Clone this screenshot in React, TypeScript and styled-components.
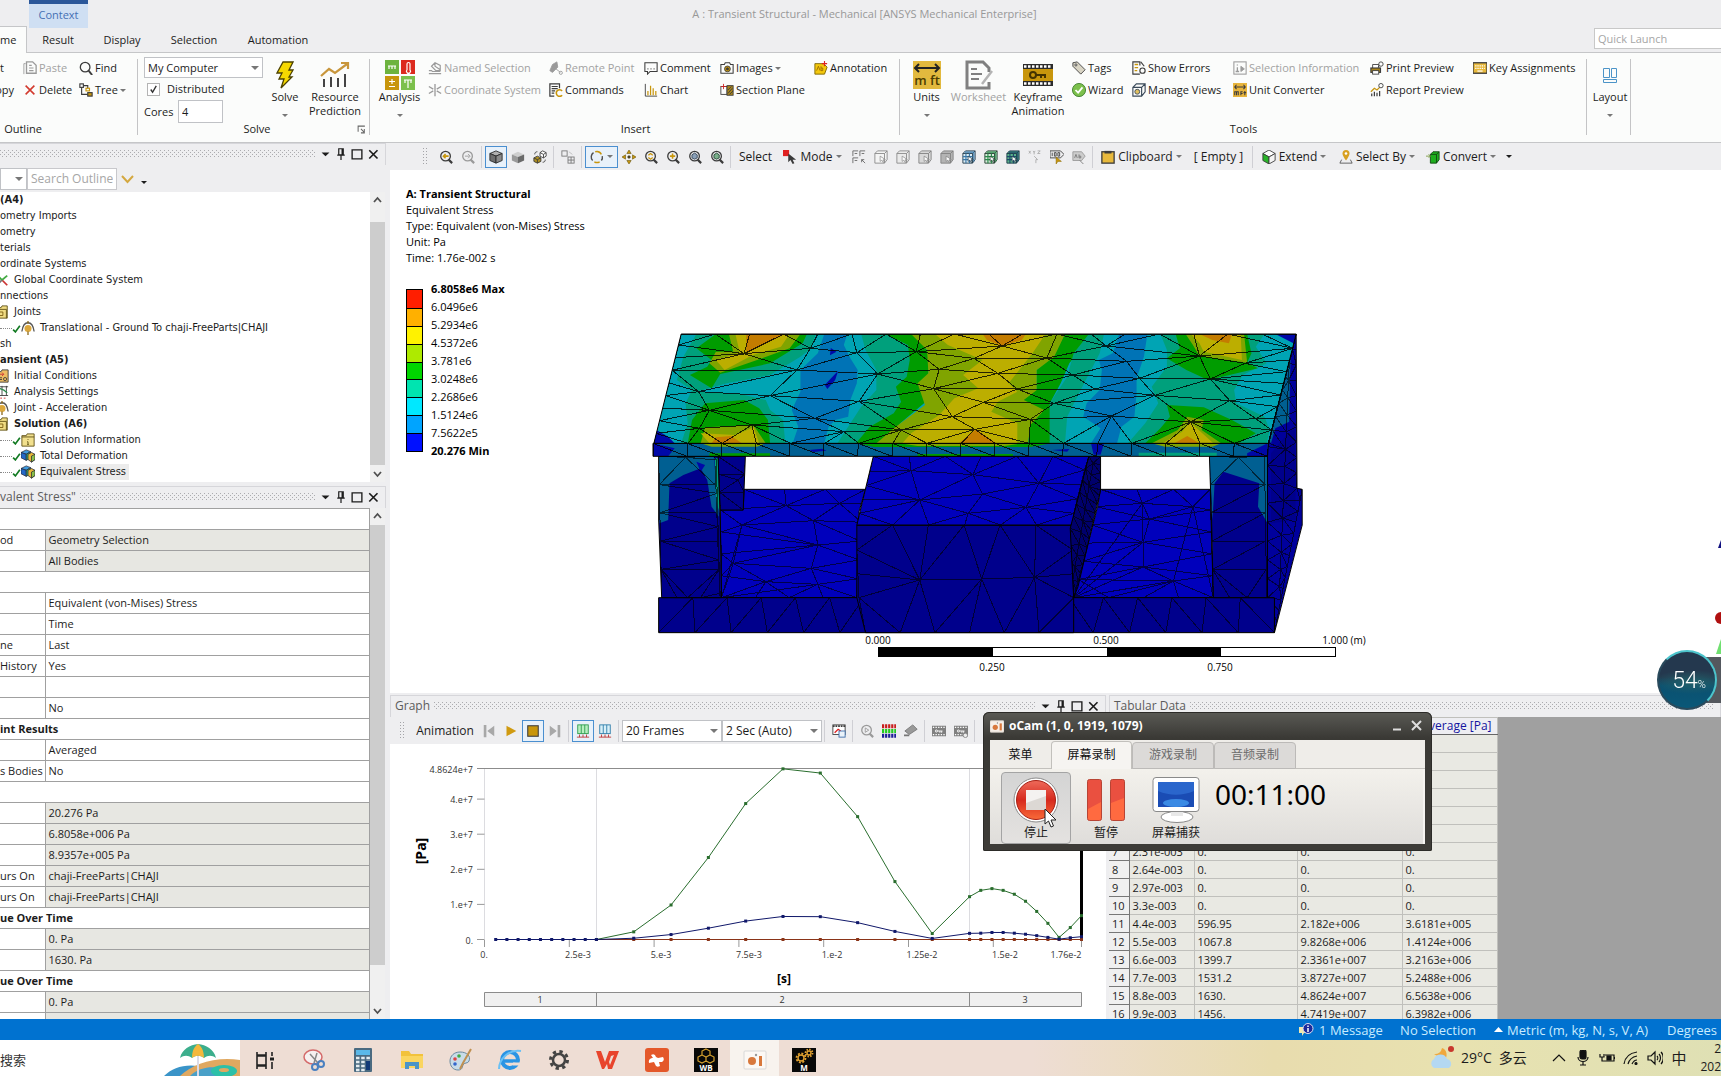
import React from 'react';
import styled, { createGlobalStyle, css } from 'styled-components';

/* ---------- base ---------- */

const ui = `"Open Sans", "Noto Sans", "Noto Sans CJK SC", sans-serif`;

const Global = createGlobalStyle`
  * { box-sizing: border-box; }
  body { margin: 0; overflow: hidden; background: #eeeef0; font: 11px/16px ${ui}; color: #1c1c1c; }
  button, input, select { font: inherit; color: inherit; margin: 0; }
  button { border: 0; background: none; padding: 0; cursor: default; }
  svg { display: block; flex: none; }
`;

const Shell = styled.div`
  height: 100vh;
  display: flex;
  flex-direction: column;
  overflow: hidden;
`;

/* ---------- icons ---------- */

const K = '#3c3c3c';
const GOLD = '#c8960c';
const GREY = '#9a9a9a';

const zoomGlass = (inner: React.ReactNode, c = K) => (
  <g fill="none" stroke={c}>
    <circle cx="7.5" cy="7" r="5.5" strokeWidth="1.5" />
    <path d="M11 11l4 4" strokeWidth="2.500" />
    {inner}
  </g>
);
const selCube = (stroke: string, fill: string, grid?: string) => (
  <g>
    <path d="M1 4l3-3h11v10l-3 4H1z" fill={fill} stroke={stroke} />
    <path d="M1 4h11v11M12 4l3-3" fill="none" stroke={stroke} />
    {grid && <path d="M4.500 4v11M8.500 4v11M1 7.500h11M1 11h11M3 2.500h11M13.500 3v10" stroke={grid} strokeWidth="1.300" fill="none" />}
    <path d="M7 7v6l2-1.500 1.500 3 1-.5-1-3H13z" fill="#fff" stroke={stroke} strokeWidth=".8" />
  </g>
);
const film = (
  <g>
    <rect x="0" y="2" width="16" height="12" fill="#808080" />
    <path d="M1 3.800h14M1 12.200h14" stroke="#fff" strokeWidth="1.500" strokeDasharray="1.500 1.500" />
    <circle cx="5" cy="8" r="1.200" fill="none" stroke="#fff" />
    <path d="M6 8h6M9 8v2M11 8v2" stroke="#fff" />
  </g>
);

const art: Record<string, React.ReactNode> = {
  paste: <g fill="none" stroke={GREY}><path d="M1 15V3h2" /><path d="M4 1h7l4 4v9H4z" strokeWidth="1.500" /><path d="M7 5h3M7 8h5M7 11h5" strokeWidth="1.300" /></g>,
  find: <g fill="none" stroke={K} strokeWidth="1.500"><circle cx="7" cy="7" r="5.500" /><path d="M11 11L15 16" strokeWidth="2.200" /></g>,
  del: <path d="M3 3l10 10M13 3L3 13" stroke="#d23a2e" strokeWidth="1.800" />,
  tree: <g fill="none" stroke={K} strokeWidth="1.300"><rect x="1" y="1" width="4" height="4" /><path d="M3 5v8h7M5 3h5v3" /><rect x="8" y="6" width="4" height="3" stroke={GOLD} /><rect x="10" y="11" width="5" height="4" fill={GOLD} /></g>,
  named: <g fill="none" stroke={GREY} strokeWidth="1.300"><path d="M4 6l4-4 6 3v6H9zM8 2v4l6 4M1 11h3l1 1h9M1 14.500h14" /></g>,
  coord: <g fill="none" stroke={GREY} strokeWidth="1.500"><path d="M8 1v14M1 4l5 3M10 9l5 3M1 12l5-3M10 7l5-3" /></g>,
  remote: <g stroke={GREY} fill={GREY}><path d="M1 11L4 4l5-3 1 6-6 6z" /><path d="M8 9l5 4" /><circle cx="13.500" cy="13.500" r="1.800" fill="none" /></g>,
  commands: <g fill="none" stroke={K}><path d="M6 15H1V1h11v5M3 4h7M3 6.500h7M3 9h4M3 11.500h3" strokeWidth="1.400" /><path d="M15 9a3.800 3.800 0 1 0 0 5" stroke={GOLD} strokeWidth="1.800" /></g>,
  comment: <g fill="none" stroke={K}><path d="M1 2h14v10H7l-3 3v-3H1z" strokeWidth="1.200" /><path d="M4 9h1M7.500 9h1M11 9h1" strokeWidth="1.300" /></g>,
  chart: <g fill="none"><path d="M1.500 1v14H15" stroke={K} /><path d="M4.500 14V9M7.500 14V3M10.500 14V6M13.500 14V9" stroke={GOLD} strokeWidth="1.400" /></g>,
  images: <g fill="none" stroke={K}><path d="M1 4h4l1-2h5l1 2h3v10H1z" strokeWidth="1.200" /><circle cx="8.500" cy="9" r="3.300" fill={GOLD} /><circle cx="8.500" cy="9" r="1.200" fill={K} /></g>,
  section: <g fill="none" stroke={K}><rect x="1" y="4" width="7" height="9" /><rect x="8" y="3" width="7" height="11" fill="#a8841a" /><path d="M9 12l5-6M9 8l4-4M11 13l4-4" /><path d="M4 1v6M1 4h6" stroke="#c22" /></g>,
  annotation: <g><path d="M1 3h10l4 4-3 8H1z" fill="#f4c80c" stroke="#7a6200" /><path d="M3 11l2-5 2 5M8 6v5h2V8H8" fill="none" stroke="#9a6c00" /><path d="M12 0v6M9 3h6" stroke="#d22" strokeWidth="1.300" /></g>,
  tags: <g fill="#d9d5c5" stroke={K}><path d="M1 2l5-1 9 9-5 5-9-9z" /><circle cx="4.500" cy="4.500" r="1.200" fill="#fff" /></g>,
  wizard: <g><circle cx="8" cy="8" r="7.500" fill="#7cc04c" stroke="#3c7a2c" /><path d="M4 8l3 3 5-6" fill="none" stroke="#fff" strokeWidth="2" /></g>,
  errors: <g fill="none" stroke={K}><path d="M9 15H1V1h8v4" strokeWidth="1.300" /><path d="M3 4h4M3 7.500h4M3 11h3" stroke={GOLD} strokeWidth="1.500" /><path d="M10 1l4 5" strokeWidth="1.300" /><circle cx="12" cy="11" r="3" strokeWidth="1.300" /></g>,
  views: <g fill="none" stroke="#3a4a5a"><path d="M1 5l4-4h10v9l-4 5H1zM1 5h10v10M11 5l4-4" strokeWidth="1.300" /><circle cx="6" cy="10" r="2.800" fill="#e0c060" /></g>,
  selinfo: <g fill="none" stroke={GREY}><rect x="1" y="1" width="14" height="14" strokeWidth="1.200" /><path d="M5 4v1M5 7v5M3 12h4" strokeWidth="1.500" /><path d="M9 6v6l4-3z" fill={GREY} /></g>,
  unitconv: <g><rect x="0" y="0" width="16" height="16" fill="#e8b53c" /><path d="M2 4.500h12M4 2l-2 2.500L4 7M12 2l2 2.500L12 7M2 14V10h4v4M4 10v4M9 14v-4h2M9 12h2M13.500 9v5M12 11h3" stroke={K} fill="none" strokeWidth="1.200" /></g>,
  print: <g><path d="M3 8V4h7v4" fill="#fff" stroke={K} /><rect x="1" y="8" width="11" height="5" fill="#a8841a" stroke={K} strokeWidth="1.300" /><rect x="3" y="11" width="7" height="4" fill="#fff" stroke={K} /><circle cx="12.500" cy="3.500" r="2.500" fill="#fff" stroke={K} /><path d="M10.500 5.500L9 7" stroke={K} /></g>,
  report: <g fill="none"><path d="M2 15v-3M5 15v-5M8 15v-4M11 15V9" stroke={K} strokeWidth="1.400" /><path d="M1 10l4-4 3 2 3-3" stroke={GOLD} strokeWidth="1.500" /><circle cx="12.500" cy="3" r="2.500" stroke={K} /></g>,
  keys: <g><rect x="0" y="2" width="16" height="12" fill="#e8b93c" stroke={K} strokeWidth="1.500" /><path d="M2.500 5.500h11M2.500 8.500h11" stroke="#fff" strokeWidth="1.400" strokeDasharray="1.500 1" /><path d="M5 11.500h6" stroke="#fff" strokeWidth="1.400" /></g>,
  zprev: zoomGlass(<path d="M11 7H5M7.500 4.500L5 7l2.500 2.500" stroke={GOLD} strokeWidth="1.800" />),
  znext: zoomGlass(<path d="M4.500 7h5M8 4.500L10.500 7 8 9.500" />, GREY),
  cubeBox: <g stroke="#2a2a2a"><path d="M8 1l7 3-7 3-7-3z" fill="#b0b0b0" /><path d="M1 4l7 3v8l-7-3z" fill="#6e6e6e" /><path d="M15 4L8 7v8l7-3z" fill="#8a8a8a" /></g>,
  cubeSolid: <g><path d="M8 2l7 3-7 3-7-3z" fill="#cfcfcf" /><path d="M1 5l7 3v7l-7-3z" fill="#9a9a9a" /><path d="M15 5L8 8v7l7-3z" fill="#6a6a6a" /></g>,
  cubes: <g stroke={K}><path d="M1 9l4-2 4 2v4l-4 2-4-2z" fill="#b09020" /><path d="M8 3l3-2 4 2v4l-3 2-4-2z" fill="#fff" /><path d="M8 3l4 2 3-2M12 5v4M1 9l4 2 4-2M5 11v4M2 5c0-2 1-3 3-3M14 11c0 2-1 3-3 3" fill="none" /></g>,
  layers: <g fill="none" stroke="#777"><rect x="1" y="1" width="6" height="6" /><rect x="8" y="8" width="7" height="7" /><path d="M11.500 8v7M8 11.500h7" /><path d="M9 2l4 3" stroke="#bbb" /></g>,
  rotate: <g fill="none" stroke="#505050" strokeWidth="1.600"><path d="M3 12a6 6 0 0 1 1-9" /><path d="M6 2a6 6 0 0 1 7 3" stroke={GOLD} /><path d="M14 7a6 6 0 0 1-1 5" /><path d="M11 13.500a6 6 0 0 1-6 0" stroke={GOLD} /></g>,
  pan: <g fill={GOLD} stroke="#5a4800" strokeWidth=".6"><path d="M8 0l2.500 4h-5zM8 16l2.500-4h-5zM0 8l4-2.500v5zM16 8l-4-2.500v5z" /><circle cx="8" cy="8" r="1.500" fill={K} /></g>,
  zvert: zoomGlass(<path d="M5 6l2.500-2L10 6M5 8.500l2.500 2 2.500-2" stroke={GOLD} strokeWidth="1.500" />),
  zplus: zoomGlass(<path d="M7.500 4v6M4.500 7h6" stroke={GOLD} strokeWidth="1.800" />),
  zcube: zoomGlass(<path d="M4.500 5.500l3-2 3 2v3.500l-3 1.500-3-1.500z" fill="#8aa0b8" stroke="#345" />),
  zcube2: zoomGlass(<path d="M4.500 5.500l3-2 3 2v3.500l-3 1.500-3-1.500z" fill="#7ab08a" stroke="#243" />),
  mode: <g><rect x="0" y="0" width="7" height="7" fill="#e02020" /><path d="M6 4v10l2.500-2.500L11 16l2-1-2-4h4z" fill="#3a3a3a" /></g>,
  sgrid: <g fill="none" stroke="#666"><path d="M1 7V1h6M9 7V1h6M1 15V9h6M3 4h3M11 4h3M3 12h3M11 11l4 4M11 14v-3h3" /></g>,
  sc1: selCube('#888', '#f4f4f4'),
  sc2: selCube('#888', '#eaeaea'),
  sc3: selCube('#808080', '#d8d8d8'),
  sc4: selCube('#808080', '#b4b4b4'),
  sc5: selCube('#203848', '#dcecf4', '#3a78a8'),
  sc6: selCube('#1e3a2c', '#d8ecdc', '#2a8a4a'),
  sc7: selCube('#1c3848', '#5ab08a', '#1c4a6a'),
  xyz: <g fill="none" stroke="#aaa"><path d="M1 1l2 3M3 1L1 4M6 1l1 2 1-2M7 3v2M11 1h3l-3 3h3M7 7l4 4h-2v4" /></g>,
  tag100: <g fill="none" stroke={K}><path d="M0 1h12l4 4-4 4H0z" /><path d="M2.500 3v4M5 3h2v4H5zM9 3h2v4H9z" /><path d="M7 8v8l2-3h4z" fill={GOLD} stroke="#8a6a00" strokeWidth=".6" /></g>,
  abc: <g><path d="M1 2h10l4 5-4 5H1z" fill="#ccc" stroke="#999" /><path d="M3 9l1.500-4L6 9M8 5v4h2V7H8M9 12l4 4" fill="none" stroke="#777" /></g>,
  clipboard: <g><rect x="1" y="2" width="14" height="13" fill="#e8b93c" stroke={K} strokeWidth="1.500" /><path d="M4 1h8v3H4z" fill={K} /></g>,
  extend: <g stroke={K}><path d="M8 0l7 4-7 4-7-4z" fill="#fff" /><path d="M1 4l7 4v8l-7-4z" fill="#28b428" /><path d="M15 4L8 8v8l7-4z" fill="#f4f4f4" /></g>,
  selectby: <g><path d="M8 0a4 4 0 0 1 4 4c0 3-4 8-4 8S4 7 4 4a4 4 0 0 1 4-4z" fill="#d8a020" /><circle cx="8" cy="4" r="1.500" fill="#fff" /><path d="M3 11l-2 4M13 11l2 4M1 15h14" fill="none" stroke="#555" /></g>,
  convert: <g><path d="M5 5l3-3h7v9l-3 4H5z" fill="#1eae1e" stroke="#114411" /><path d="M5 5h7v10M12 5l3-3" fill="none" stroke="#114411" /><path d="M0 7h5M3 5l2 2-2 2" fill="none" stroke="#7a9a40" /></g>,
  csys: <g strokeWidth="2" fill="none"><path d="M8 8L3 3" stroke="#3a3" /><path d="M8 8l6 6" stroke="#c33" /><path d="M8 8l6-5" stroke="#4a4" /><path d="M8 8l-5 5" stroke="#777" /></g>,
  folder: <g stroke="#5c4e12"><path d="M1 3h6l1-2h6v14H1z" fill="#f0dc82" /><path d="M1 5h12v10" fill="none" /><path d="M4 12V8h5v4z" fill="none" stroke="#7a5c10" /></g>,
  info: <g stroke="#5c4e12"><path d="M1 3h5l1-2h8v14H1z" fill="#f2e08e" /><path d="M1 4.500h14" /><path d="M8 7v1M7 10h1v3M7 13h2" fill="none" /></g>,
  joint: <g><path d="M1 12C2 5 5 2 8 2s6 3 7 10" fill="none" stroke="#555" strokeWidth="1.500" /><circle cx="8" cy="8.500" r="4" fill="#dca83c" /><path d="M8 12v4M8 0v3" stroke="#8a6a20" strokeWidth="1.500" /></g>,
  init: <g stroke={K}><path d="M1 3h6l1-2h7v14H1z" fill="#eebc62" /><path d="M3 6h7M8 4l2 2-2 2" fill="none" stroke="#c33" /><path d="M4 10h4M4 12h4" /><circle cx="11.500" cy="11.500" r="1.800" fill="none" /></g>,
  settings: <g fill="none" stroke={K}><path d="M3 1v11M8 1v11M13 1v11M1 2h14M1 12h14" /><path d="M1 8c3-6 8-4 13 1" stroke="#2a8a4a" strokeWidth="1.500" /><path d="M2 15h12" stroke="#c22" strokeDasharray="2 2" /></g>,
  result: <g strokeWidth=".8" stroke="#223"><path d="M0 4l6-3 5 2-5 3z" fill="#3f9be0" /><path d="M0 4l6 2v7l-6-3z" fill="#2468c8" /><path d="M6 6l5-3v7l-5 3z" fill="#38b070" /><path d="M8 6l4-2 4 2v6l-4 3-4-3z" fill="#e8b838" /><path d="M12 8l4-2v6l-4 3z" fill="#8ac04a" /></g>,
  check: <path d="M2 10l4 4 8-11" fill="none" stroke="#127a22" strokeWidth="3" />,
  pin: <path d="M5 1h6v8H5zM9.500 1v8M3 9.500h10M8 10v6" fill="none" stroke="#1c1c1c" strokeWidth="1.600" />,
  max: <path d="M1.500 2.500h13v12h-13z" fill="none" stroke="#1c1c1c" strokeWidth="1.800" />,
  close: <path d="M3 3l11 11M14 3L3 14" stroke="#1c1c1c" strokeWidth="2.200" />,
  drop: <path d="M1 6h14l-7 7z" fill="#1c1c1c" />,
  first: <path d="M2 1h3v14H2zM14 2v12L6 8z" fill="#a8a8a8" />,
  last: <path d="M11 1h3v14h-3zM2 2v12l8-6z" fill="#a8a8a8" />,
  play: <path d="M2 1v14l13-7z" fill="#d09a10" />,
  stopsq: <rect x="1" y="1" width="14" height="14" fill="#c8960c" stroke="#444" strokeWidth="1.500" />,
  bars1: <g fill="none" stroke="#2a9a4a"><rect x="2" y="1" width="12" height="10" fill="#b8f0c0" /><path d="M6 1v10M10 1v10" /><path d="M1 15h14M4 12v3M8 12v3M12 12v3" stroke="#b33" /></g>,
  bars2: <g fill="none" stroke="#2a7aa8"><rect x="2" y="1" width="12" height="10" fill="#d8f0f8" /><path d="M6 1v10M10 1v10" /><path d="M1 15h14M4 12v3M8 12v3M12 12v3" stroke="#b33" /></g>,
  expo: <g><rect x="1" y="1" width="14" height="11" fill="#fff" stroke={K} /><path d="M1 2.500h14" stroke={K} strokeWidth="2" strokeDasharray="2 1" /><path d="M3 10l4-4 3 2" fill="none" stroke="#d22" strokeWidth="1.500" /><rect x="8" y="8" width="7" height="7" fill="#eaf2fa" stroke="#3a6aa8" /></g>,
  zplay: zoomGlass(<path d="M6 4.500v5l4-2.500z" />, GREY),
  rgb: <g fill="none" strokeWidth="4.500" strokeDasharray="2.500 1"><path d="M0 2.500h16" stroke="#c81e1e" /><path d="M0 8h16" stroke="#22cc22" /><path d="M0 13.500h16" stroke="#1e1e9a" /></g>,
  cam: <g fill="#999" stroke="#777"><path d="M1 8l9-7 5 5-9 6z" /><path d="M0 13h6" strokeWidth="2" /></g>,
  film1: film,
  film2: <g>{film}<circle cx="13" cy="13" r="2.500" fill="#eee" stroke="#888" /></g>,
  corner: <g fill="none" stroke="#666" strokeWidth="1.800"><path d="M2 12V2h12M7 7l6 6M13 7v7H7" /></g>,
};

const Icon = ({ n, s = 14 }: { n: string; s?: number }) => (
  <svg width={s} height={s} viewBox="0 0 16 16" aria-hidden="true">{art[n]}</svg>
);

const Caret = styled.i<{ $dark?: boolean; $big?: boolean }>`
  width: 0;
  height: 0;
  border: ${p => (p.$big ? 4 : 3)}px solid transparent;
  border-bottom: 0;
  border-top-color: ${p => (p.$dark ? '#1c1c1c' : '#777')};
`;

/* ---------- title and tabs ---------- */

const TitleBar = styled.header`
  display: grid;
  grid-template-columns: 29px 59px 1fr 80px;
  height: 26px;
`;
const ContextTab = styled.div`
  grid-column: 2;
  border-top: 4px solid #2b579a;
  background: #cfdff3;
  color: #4670b4;
  text-align: center;
  line-height: 22px;
`;
const Title = styled.h1`
  margin: 0;
  font-size: 11px;
  font-weight: 400;
  line-height: 28px;
  color: #989898;
  text-align: center;
`;
const Tabs = styled.nav`
  display: flex;
  height: 27px;
  border-bottom: 1px solid #c5c6c8;
`;
const Tab = styled.button<{ $w: number; $on?: boolean }>`
  width: ${p => p.$w}px;
  height: 27px;
  ${p => p.$on && css`
    background: #fbfcfb;
    border: 1px solid #c5c6c8;
    border-width: 1px 1px 0 0;
    padding-right: 12px;
    text-align: right;
  `}
`;
const QuickLaunch = styled.input`
  margin: 2px 0 0 auto;
  width: 127px;
  height: 21px;
  border: 1px solid #c8c8c8;
  border-right: 0;
  background: #fff;
  padding: 0 3px;
  &::placeholder { color: #a6a6a6; opacity: 1; }
`;

/* ---------- ribbon ---------- */

const Ribbon = styled.div`
  display: flex;
  height: 90px;
  background: #fbfcfb;
  border-bottom: 1px solid #c5c6c8;
`;
const Group = styled.section<{ $w: number; $pad?: number }>`
  position: relative;
  width: ${p => p.$w}px;
  padding: 4px 0 0 ${p => p.$pad ?? 0}px;
  display: flex;
  flex-direction: column;
  &::after {
    content: '';
    position: absolute;
    right: 0;
    top: 6px;
    bottom: 7px;
    width: 1px;
    background: #c4c4c6;
  }
`;
const GroupBody = styled.div`
  display: flex;
  height: 64px;
`;
const GroupLabel = styled.div<{ $w?: number }>`
  width: ${p => (p.$w ? p.$w + 'px' : '100%')};
  display: flex;
  justify-content: center;
  align-items: center;
  position: relative;
  & > button { position: absolute; right: 4px; }
`;
const Col = styled.div<{ $w: number }>`
  width: ${p => p.$w}px;
  flex: none;
`;
const Cmd = styled.button<{ $off?: boolean; $cut?: boolean }>`
  display: flex;
  align-items: center;
  gap: 2px;
  height: 22px;
  white-space: nowrap;
  color: ${p => (p.$off ? '#a2a2a2' : '#1c1c1c')};
  ${p => p.$cut && 'width: 14px; justify-content: flex-end;'}
`;
const Big = styled.button<{ $w: number; $off?: boolean }>`
  width: ${p => p.$w}px;
  flex: none;
  display: flex;
  flex-direction: column;
  align-items: center;
  padding-top: 3px;
  line-height: 14px;
  color: ${p => (p.$off ? '#a2a2a2' : '#1c1c1c')};
  & > span:first-child { height: 30px; display: grid; place-items: center; }
  & > i { margin-top: 10px; }
`;
const Combo = styled.label<{ $w: number; $h?: number }>`
  position: relative;
  display: flex;
  align-items: center;
  width: ${p => p.$w}px;
  height: ${p => p.$h ?? 21}px;
  flex: none;
  select {
    appearance: none;
    width: 100%;
    height: 100%;
    border: 1px solid #c0c2c6;
    background: #fff;
    padding: 0 3px;
    border-radius: 0;
  }
  i { position: absolute; right: 4px; pointer-events: none; }
`;
const CheckRow = styled.label`
  display: flex;
  align-items: center;
  gap: 7px;
  height: 22px;
  padding-left: 3px;
  input {
    appearance: none;
    width: 13px;
    height: 13px;
    border: 1px solid #b4b4b4;
    background: #fff url("data:image/svg+xml,%3Csvg xmlns='http://www.w3.org/2000/svg' viewBox='0 0 12 12'%3E%3Cpath d='M3 6l2 3 4-7' fill='none' stroke='%23333' stroke-width='1.500'/%3E%3C/svg%3E");
  }
`;
const CoresRow = styled.label`
  display: flex;
  align-items: center;
  justify-content: space-between;
  width: 79px;
  input { width: 45px; height: 23px; border: 1px solid #c0c2c6; background: #fff; padding: 0 3px; }
`;

const Item = ({ i, children, off, drop }: { i: string; children: React.ReactNode; off?: boolean; drop?: boolean }) => (
  <Cmd $off={off}><Icon n={i} />{children}{drop && <Caret />}</Cmd>
);

const RibbonBar = () => (
  <Ribbon>
    <Group $w={138}>
      <GroupBody>
        <Col $w={23}><Cmd>t</Cmd><Cmd $cut>opy</Cmd></Col>
        <Col $w={56}><Item i="paste" off>Paste</Item><Item i="del">Delete</Item></Col>
        <Col $w={58}><Item i="find">Find</Item><Item i="tree" drop>Tree</Item></Col>
      </GroupBody>
      <GroupLabel $w={46}>Outline</GroupLabel>
    </Group>
    <Group $w={232} $pad={6}>
      <GroupBody>
        <Col $w={118}>
          <Combo $w={119}><select aria-label="Solver"><option>My Computer</option></select><Caret $big /></Combo>
          <CheckRow><input type="checkbox" defaultChecked />Distributed</CheckRow>
          <CoresRow>Cores<input defaultValue="4" /></CoresRow>
        </Col>
        <Big $w={46}>
          <span><svg width="18" height="28" viewBox="0 0 18 28"><path d="M7 1h10l-4 8h4l-4 7h3L5 27l3-9H3l3-6H1z" fill="#f6d800" stroke="#4c4200" strokeWidth="1.300" /></svg></span>
          Solve<Caret />
        </Big>
        <Big $w={54}>
          <span><svg width="30" height="26" viewBox="0 0 30 26"><path d="M4 25v-8M11 25V15M18 25v-9M25 25V12" stroke="#444" strokeWidth="2" /><path d="M1 14l8-7 6 4L27 2M21 1h7v6" fill="none" stroke="#c8963c" strokeWidth="2.200" /></svg></span>
          Resource<br />Prediction
        </Big>
      </GroupBody>
      <GroupLabel>Solve<button aria-label="Solve options"><Icon n="corner" s={9} /></button></GroupLabel>
    </Group>
    <Group $w={530} $pad={1}>
      <GroupBody>
        <Big $w={57}>
          <span><svg width="30" height="30" viewBox="0 0 30 30"><path d="M0 0h14v14H0z" fill="#6db33f" /><path d="M16 0h14v14H16z" fill="#dc2a1e" /><path d="M0 16h14v14H0z" fill="#c8960c" /><path d="M16 16h14v14H16z" fill="#7cc04c" /><path d="M3 6h8M4 6v3M7 6v3M10 6v3M22 10V4a1.500 1.500 0 0 1 3 0v6a2 2 0 1 1-3 0M7 19v5M4 21.500h6M4 26.500h6M19 20h8M23 20v8M20 20v3M26 20v3" fill="none" stroke="#fff" strokeWidth="1.200" /></svg></span>
          Analysis<Caret />
        </Big>
        <Col $w={121}><Item i="named" off>Named Selection</Item><Item i="coord" off>Coordinate System</Item></Col>
        <Col $w={95}><Item i="remote" off>Remote Point</Item><Item i="commands">Commands</Item></Col>
        <Col $w={76}><Item i="comment">Comment</Item><Item i="chart">Chart</Item></Col>
        <Col $w={94}><Item i="images" drop>Images</Item><Item i="section">Section Plane</Item></Col>
        <Col $w={80}><Item i="annotation">Annotation</Item></Col>
      </GroupBody>
      <GroupLabel>Insert</GroupLabel>
    </Group>
    <Group $w={687}>
      <GroupBody>
        <Big $w={53}>
          <span><svg width="28" height="28" viewBox="0 0 28 28"><rect width="28" height="28" fill="#e2b93e" /><path d="M2 7h24M6 3L2 7l4 4M22 3l4 4-4 4" fill="none" stroke="#222" strokeWidth="2" /><text x="14" y="24" textAnchor="middle" fontSize="13" fontWeight="600" fill="#4c3c00">m ft</text></svg></span>
          Units<Caret />
        </Big>
        <Big $w={51} $off>
          <span><svg width="28" height="30" viewBox="0 0 28 30"><path d="M24 12V8l-6-6H2v26h22v-6" fill="none" stroke="#808080" strokeWidth="3" /><path d="M6 9h6M6 14h11M6 19h8" stroke="#808080" strokeWidth="2" /><path d="M27 11L17 24" stroke="#b4b4b4" strokeWidth="2.500" /></svg></span>
          Worksheet
        </Big>
        <Big $w={68}>
          <span><svg width="30" height="22" viewBox="0 0 30 22"><rect width="30" height="22" fill="#2c2c2c" /><path d="M1 2.500h28M1 19.500h28" stroke="#fff" strokeWidth="2.500" strokeDasharray="2.500 1.500" /><rect y="5" width="30" height="12" fill="#c8960c" /><circle cx="10" cy="11" r="3" fill="none" stroke="#443300" strokeWidth="2" /><path d="M13 11h10M18 11v3M22 11v3" stroke="#443300" strokeWidth="2" /></svg></span>
          Keyframe<br />Animation
        </Big>
        <Col $w={60}><Item i="tags">Tags</Item><Item i="wizard">Wizard</Item></Col>
        <Col $w={101}><Item i="errors">Show Errors</Item><Item i="views">Manage Views</Item></Col>
        <Col $w={137}><Item i="selinfo" off>Selection Information</Item><Item i="unitconv">Unit Converter</Item></Col>
        <Col $w={103}><Item i="print">Print Preview</Item><Item i="report">Report Preview</Item></Col>
        <Col $w={110}><Item i="keys">Key Assignments</Item></Col>
      </GroupBody>
      <GroupLabel>Tools</GroupLabel>
    </Group>
    <Group $w={44} $pad={2}>
      <GroupBody>
        <Big $w={42}>
          <span><svg width="14" height="15" viewBox="0 0 14 15"><path d="M.5.500h6v9h-6zM8.500.500h5v9h-5zM.5 11.500h13v3H.5z" fill="none" stroke="#4c94c8" /></svg></span>
          Layout<Caret />
        </Big>
      </GroupBody>
    </Group>
  </Ribbon>
);

/* ---------- docked panels ---------- */

const Work = styled.main`
  flex: 1;
  min-height: 0;
  display: grid;
  grid-template-columns: 386px minmax(0, 1fr);
  column-gap: 4px;
`;
const Side = styled.aside`
  display: flex;
  flex-direction: column;
  min-height: 0;
`;
const PanelHead = styled.div<{ $gap?: boolean }>`
  display: flex;
  align-items: center;
  gap: 4px;
  height: 22px;
  flex: none;
  margin-top: ${p => (p.$gap ? 4 : 0)}px;
  padding: 0 6px 2px 0;
  border: 1px solid #d6d6da;
  border-width: 1px 1px 0 0;
  color: #5c5c5c;
  font-size: 12px;
  white-space: nowrap;
`;
const Dots = styled.span`
  flex: 1;
  height: 8px;
  background-image:
    conic-gradient(at 1px 1px, transparent 75%, #ababaf 0),
    conic-gradient(at 1px 1px, transparent 75%, #ababaf 0);
  background-size: 4px 4px;
  background-position: 0 0, 2px 2px;
`;
const Ctl = styled.button`
  width: 12px;
  display: grid;
  place-items: center;
`;
const Controls = () => (
  <>
    <Ctl aria-label="Menu"><Icon n="drop" s={9} /></Ctl>
    <Ctl aria-label="Pin"><Icon n="pin" s={12} /></Ctl>
    <Ctl aria-label="Maximize"><Icon n="max" s={12} /></Ctl>
    <Ctl aria-label="Close"><Icon n="close" s={12} /></Ctl>
  </>
);

const SearchRow = styled.div`
  display: flex;
  align-items: center;
  height: 27px;
  flex: none;
  font-size: 12px;
  input {
    width: 90px;
    height: 22px;
    border: 1px solid #c8c8cc;
    background: #fff;
    padding: 0 3px;
    margin-right: 4px;
  }
  input::placeholder { color: #a6a6a6; opacity: 1; }
  & > i { margin: 8px 0 0 7px; }
`;
const Scrolled = styled.div<{ $h?: number }>`
  display: flex;
  min-height: 0;
  ${p => (p.$h ? `height: ${p.$h}px; flex: none;` : 'flex: 1;')}
  padding-right: 1px;
`;
const Pane = styled.div<{ $white?: boolean }>`
  flex: 1;
  min-width: 0;
  overflow: hidden;
  ${p => p.$white && 'background: #fff;'}
`;
const ScrollBar = styled.div<{ $top: number; $bottom: number }>`
  width: 15px;
  display: flex;
  flex-direction: column;
  align-items: center;
  background: #f0f0f0;
  & > span { flex: 1; width: 100%; margin: ${p => p.$top}px 0 ${p => p.$bottom}px; background: #cdcdcd; }
`;
const Arrow = ({ up }: { up?: boolean }) => (
  <svg width="15" height="17" viewBox="0 0 15 17">
    <path d={up ? 'M4 10l3.500-4 3.500 4' : 'M4 7l3.500 4L11 7'} fill="none" stroke="#505050" strokeWidth="1.800" />
  </svg>
);
const TreeList = styled.ul`
  list-style: none;
  margin: 0;
  padding: 0;
  font-family: "DejaVu Sans Condensed", "DejaVu Sans", sans-serif;
  font-size: 11px;
`;
const TreeRow = styled.li<{ $bold?: boolean; $sel?: boolean }>`
  display: flex;
  align-items: center;
  height: 16px;
  white-space: nowrap;
  font-weight: ${p => (p.$bold ? 700 : 400)};
  & > span { padding-right: 3px; ${p => p.$sel && 'background: #ececec;'} }
`;
const Lead = styled.div<{ $w: number }>`
  width: ${p => p.$w}px;
  flex: none;
  display: flex;
  align-items: center;
  justify-content: flex-end;
  padding-right: 5px;
  overflow: hidden;
`;
const Guide = styled.b`
  flex: 1;
  border-top: 1px dotted #888;
`;

type TreeNode = { t: string; lvl?: number; i?: string; bold?: boolean; sel?: boolean };
const treeRows: TreeNode[] = [
  { t: '(A4)', bold: true },
  { t: 'ometry Imports' },
  { t: 'ometry' },
  { t: 'terials' },
  { t: 'ordinate Systems' },
  { t: 'Global Coordinate System', lvl: 1, i: 'csys' },
  { t: 'nnections' },
  { t: 'Joints', lvl: 1, i: 'folder' },
  { t: 'Translational - Ground To chaji-FreeParts|CHAJI', lvl: 2, i: 'joint' },
  { t: 'sh' },
  { t: 'ansient (A5)', bold: true },
  { t: 'Initial Conditions', lvl: 1, i: 'init' },
  { t: 'Analysis Settings', lvl: 1, i: 'settings' },
  { t: 'Joint - Acceleration', lvl: 1, i: 'joint' },
  { t: 'Solution (A6)', lvl: 1, i: 'folder', bold: true },
  { t: 'Solution Information', lvl: 2, i: 'info' },
  { t: 'Total Deformation', lvl: 2, i: 'result' },
  { t: 'Equivalent Stress', lvl: 2, i: 'result', sel: true },
];

const Props = styled.table`
  width: 100%;
  border-collapse: collapse;
  table-layout: fixed;
  background: #fff;
  td, th {
    height: 21px;
    padding: 0;
    border: 1px solid #a0a0a0;
    border-left: 0;
    line-height: 18px;
    white-space: nowrap;
    overflow: hidden;
    text-align: left;
    font-weight: 400;
  }
  th[colspan] { font-weight: 700; }
`;
const Value = styled.td<{ $ro?: boolean }>`
  && { padding-left: 3px; }
  background: ${p => (p.$ro ? '#e7e7e2' : '#fff')};
`;
type Prop = [string, string | null, boolean?];
const props: Prop[] = [
  ['', null],
  ['od', 'Geometry Selection', true],
  ['', 'All Bodies', true],
  ['', null],
  ['', 'Equivalent (von-Mises) Stress'],
  ['', 'Time'],
  ['ne', 'Last'],
  ['History', 'Yes'],
  ['', ''],
  ['', 'No'],
  ['int Results', null],
  ['', 'Averaged'],
  ['s Bodies', 'No'],
  ['', null],
  ['', '20.276 Pa', true],
  ['', '6.8058e+006 Pa', true],
  ['', '8.9357e+005 Pa', true],
  ['urs On', 'chaji-FreeParts|CHAJI', true],
  ['urs On', 'chaji-FreeParts|CHAJI', true],
  ['ue Over Time', null],
  ['', '0. Pa', true],
  ['', '1630. Pa', true],
  ['ue Over Time', null],
  ['', '0. Pa', true],
  ['', '4.8624e+007 Pa', true],
];

const SidePanels = () => (
  <Side>
    <PanelHead><Dots /><Controls /></PanelHead>
    <SearchRow>
      <Combo $w={27} $h={22}><select aria-label="Filter"><option> </option></select><Caret $big /></Combo>
      <input placeholder="Search Outline" aria-label="Search Outline" />
      <button aria-label="Expand"><svg width="13" height="10" viewBox="0 0 13 10"><path d="M1 2l5.500 6L12 2" fill="none" stroke="#d4a840" strokeWidth="2" /></svg></button>
      <Caret $dark />
    </SearchRow>
    <Scrolled $h={290}>
      <Pane $white>
        <TreeList>
          {treeRows.map((r, k) => (
            <TreeRow key={k} $bold={r.bold} $sel={r.sel}>
              {r.lvl === 1 && <Lead $w={14}><Icon n={r.i!} /></Lead>}
              {r.lvl === 2 && <Lead $w={40}><Guide /><Icon n="check" s={9} /><Icon n={r.i!} /></Lead>}
              <span>{r.t}</span>
            </TreeRow>
          ))}
        </TreeList>
      </Pane>
      <ScrollBar $top={13} $bottom={0}><Arrow up /><span /><Arrow /></ScrollBar>
    </Scrolled>
    <PanelHead $gap>
      <span>valent Stress"</span><Dots /><Controls />
    </PanelHead>
    <Scrolled>
      <Pane>
        <Props>
          <colgroup><col width="45" /><col /></colgroup>
          <tbody>
            {props.map(([a, b, ro], k) => (
              <tr key={k}>
                {b === null ? <th colSpan={2}>{a}</th> : <><th>{a}</th><Value $ro={ro}>{b}</Value></>}
              </tr>
            ))}
          </tbody>
        </Props>
      </Pane>
      <ScrollBar $top={0} $bottom={37}><Arrow up /><span /><Arrow /></ScrollBar>
    </Scrolled>
  </Side>
);

/* ---------- graphics toolbar ---------- */

const Right = styled.div`
  display: flex;
  flex-direction: column;
  min-width: 0;
  min-height: 0;
`;
const Strip = styled.div<{ $pad: number }>`
  display: flex;
  align-items: center;
  height: 27px;
  flex: none;
  padding-left: ${p => p.$pad}px;
  font-size: 12px;
`;
const Grip = styled.span`
  width: 6px;
  height: 18px;
  margin-right: 6px;
  background-image: conic-gradient(at 1px 1px, transparent 75%, #a4a4a8 0);
  background-size: 3px 3px;
`;
const Tool = styled.button<{ $w?: number; $on?: boolean }>`
  width: ${p => p.$w ?? 22}px;
  height: 22px;
  flex: none;
  display: flex;
  align-items: center;
  justify-content: center;
  gap: 3px;
  white-space: nowrap;
  ${p => p.$on && 'border: 1px solid #4a8fd0; background: #e8f1fa;'}
`;
const Sep = styled.span`
  width: 1px;
  height: 22px;
  flex: none;
  margin: 0 3px 0 2px;
  background: #cfcfd4;
`;

const GraphicsBar = () => (
  <Strip $pad={33}>
    <Grip />
    <Tool aria-label="Previous zoom"><Icon n="zprev" /></Tool>
    <Tool aria-label="Next zoom"><Icon n="znext" /></Tool>
    <Sep />
    <Tool $on aria-label="Shaded with edges"><Icon n="cubeBox" /></Tool>
    <Tool aria-label="Shaded"><Icon n="cubeSolid" /></Tool>
    <Tool aria-label="Wireframe"><Icon n="cubes" /></Tool>
    <Sep />
    <Tool aria-label="Views"><Icon n="layers" /></Tool>
    <Sep />
    <Tool $on $w={33} aria-label="Rotate"><Icon n="rotate" /><Caret /></Tool>
    {['pan', 'zvert', 'zplus', 'zcube', 'zcube2'].map(n => <Tool key={n} aria-label={n}><Icon n={n} /></Tool>)}
    <Sep />
    <Tool $w={43}>Select</Tool>
    <Tool $w={71}><Icon n="mode" />Mode<Caret /></Tool>
    {['sgrid', 'sc1', 'sc2', 'sc3', 'sc4', 'sc5', 'sc6', 'sc7', 'xyz', 'tag100', 'abc'].map(n => (
      <Tool key={n} aria-label={n}><Icon n={n} /></Tool>
    ))}
    <Sep />
    <Tool $w={91}><Icon n="clipboard" />Clipboard<Caret /></Tool>
    <Tool $w={63}>[ Empty ]</Tool>
    <Sep />
    <Tool $w={76}><Icon n="extend" />Extend<Caret /></Tool>
    <Tool $w={90}><Icon n="selectby" />Select By<Caret /></Tool>
    <Tool $w={78}><Icon n="convert" />Convert<Caret /></Tool>
    <Tool $w={18} aria-label="More"><Caret $dark /></Tool>
  </Strip>
);

/* ---------- finite element model ---------- */

type P = [number, number];

// Bowyer-Watson triangulation; x is weighted so that cells come out long and flat.
function edges(pts: P[], sx = 0.5): string {
  const q: P[] = pts.map(([x, y]) => [x * sx, y]);
  const n = q.length;
  q.push([-9000, -9000], [9000, -9000], [0, 9000]);
  const circle = (a: number, b: number, c: number) => {
    const [ax, ay] = q[a], [bx, by] = q[b], [cx, cy] = q[c];
    const d = 2 * (ax * (by - cy) + bx * (cy - ay) + cx * (ay - by)) || 1e-9;
    const A = ax * ax + ay * ay, B = bx * bx + by * by, C = cx * cx + cy * cy;
    const x = (A * (by - cy) + B * (cy - ay) + C * (ay - by)) / d;
    const y = (A * (cx - bx) + B * (ax - cx) + C * (bx - ax)) / d;
    return { v: [a, b, c], x, y, r: (ax - x) ** 2 + (ay - y) ** 2 };
  };
  let tris = [circle(n, n + 1, n + 2)];
  for (let i = 0; i < n; i++) {
    const bad = tris.filter(t => (q[i][0] - t.x) ** 2 + (q[i][1] - t.y) ** 2 < t.r);
    const count = new Map<string, [number, number]>();
    bad.forEach(({ v: [a, b, c] }) => [[a, b], [b, c], [c, a]].forEach(([s, e]) => {
      const key = Math.min(s, e) + '_' + Math.max(s, e);
      if (count.has(key)) count.delete(key); else count.set(key, [s, e]);
    }));
    tris = tris.filter(t => !bad.includes(t));
    count.forEach(([s, e]) => tris.push(circle(s, e, i)));
  }
  return tris.filter(t => t.v.every(k => k < n))
    .map(t => 'M' + t.v.map(k => pts[k].join(' ')).join('L') + 'Z').join('');
}
const row = (x0: number, x1: number, y: number, n: number): P[] =>
  Array.from({ length: n }, (_, i) => [x0 + ((x1 - x0) * i) / (n - 1), y] as P);
const line = (a: P, b: P, n: number): P[] =>
  Array.from({ length: n }, (_, i) => [a[0] + ((b[0] - a[0]) * i) / (n - 1), a[1] + ((b[1] - a[1]) * i) / (n - 1)] as P);

const roofPts: P[] = [
  ...row(95, 1513, 42, 19), ...row(32, 1449, 370, 19),
  ...line([89, 75], [37, 340], 8), ...line([1505, 85], [1456, 330], 8),
  [240, 101], [393, 85], [500, 98], [637, 95], [770, 115], [835, 78], [938, 114], [1075, 78], [1122, 124], [1290, 108], [1395, 130],
  [362, 150], [548, 162], [690, 148], [825, 160], [998, 165], [1152, 175], [1315, 177], [135, 215], [300, 227], [505, 244], [677, 206],
  [870, 207], [792, 247], [1048, 207], [1187, 226], [1360, 242], [160, 271], [403, 295], [720, 290], [955, 250], [900, 298], [1087, 288],
  [1270, 306], [258, 315], [470, 335], [602, 330], [772, 328], [1420, 296], [137, 325],
];

const C = {
  cyan: '#00a4b4', teal: '#00a07c', green: '#009c00', lime: '#80a400', yellow: '#bcae00',
  orange: '#c47c00', blue: '#0073b6', navy: '#0008a8', face: '#00008c', top: '#0000bc', edge: '#005f92',
};

const roofBands: [string, string][] = [
  [C.teal, '130,42 405,42 395,85 370,110 300,165 200,190 130,215 230,222 290,240 300,270 330,300 335,370 95,370 110,310 105,250 120,210 85,180 100,110'],
  [C.green, '175,42 385,42 375,70 300,130 185,162 165,205 115,165 155,140 165,120 130,85'],
  [C.lime, '205,42 370,42 345,85 275,118 185,158 160,130 175,95 215,95'],
  [C.yellow, '220,42 345,42 325,80 260,105 195,150 175,120 230,98'],
  [C.orange, '245,42 335,42 245,100'],
  [C.green, '150,250 240,240 275,265 295,300 300,370 110,370 120,300'],
  [C.lime, '150,322 262,316 290,370 140,370'],
  [C.yellow, '140,340 220,345 262,322 275,370 160,370'],
  [C.orange, '175,352 210,348 235,370 165,370'],
  [C.blue, '425,42 478,42 470,75 485,115 502,150 500,190 485,240 480,290 450,300 435,320 425,370 352,370 365,320 350,270 370,215 370,150 410,100'],
  [C.navy, '440,84 453,95 438,106'],
  [C.navy, '457,152 450,180 432,207 426,195'],
  [C.teal, '510,42 600,42 640,90 600,250 580,310 520,370 455,370 480,320 510,260 545,210 545,150 520,90'],
  [C.green, '565,42 640,42 665,100 665,160 655,250 600,310 560,370 498,370 530,320 585,280 602,245 590,200 615,170 622,120 618,75'],
  [C.lime, '625,42 980,42 960,110 915,150 915,210 940,265 900,320 895,370 545,370 590,320 657,255 640,190 665,160 662,90'],
  [C.yellow, '680,42 935,42 905,100 850,190 870,215 825,245 810,275 870,310 870,370 605,370 625,340 690,285 725,235 780,205 745,165 790,120 710,75'],
  [C.orange, '790,42 890,42 880,60 835,78 800,60'],
  [C.orange, '775,328 822,370 735,370'],
  [C.green, '980,42 1040,42 1020,80 990,130 970,190 945,250 945,370 895,370 900,315 932,270 885,240 915,210 915,150 955,110'],
  [C.teal, '1035,42 1070,42 1060,100 1020,200 985,290 980,370 945,370 945,250 985,170 1000,100'],
  [C.blue, '1105,42 1170,42 1162,110 1145,175 1145,220 1140,290 1110,320 1100,370 1040,370 1062,325 1022,290 1030,250 1060,210 1065,150 1058,120 1090,100'],
  [C.teal, '1200,42 1440,42 1420,80 1445,130 1390,165 1370,210 1375,250 1440,290 1452,330 1445,370 1125,370 1165,310 1195,250 1180,200 1215,140 1215,90'],
  [C.green, '1235,42 1400,42 1410,100 1400,128 1425,145 1310,180 1260,150 1215,115 1245,85'],
  [C.lime, '1258,42 1393,42 1400,128 1290,108 1275,75'],
  [C.yellow, '1270,42 1385,42 1388,120 1300,95 1290,70'],
  [C.orange, '1290,42 1365,42 1358,70 1320,60'],
  [C.green, '1215,255 1300,262 1365,300 1420,340 1380,370 1165,370 1200,325 1222,290'],
  [C.lime, '1262,290 1300,300 1295,330 1340,370 1180,370 1240,330'],
  [C.yellow, '1268,306 1322,370 1205,370 1250,335'],
  [C.orange, '1262,348 1290,370 1232,370'],
  [C.navy, '1465,42 1513,42 1510,72'],
  [C.navy, '38,330 65,350 80,370 30,370'],
];

type Face = { id: string; shape: string; fill: string; pts: P[]; sx?: number; ink?: number; bands?: [string, string][] };
const faces: Face[] = [
  { id: 'floorL', shape: '240,508 520,508 505,575 500,833 188,833 185,570 238,570', fill: C.top, sx: 0.3,
    pts: [...row(240, 520, 508, 4), ...line([186, 570], [188, 833], 5), ...line([513, 550], [500, 833], 6), ...row(188, 500, 833, 5), [337, 557], [460, 550], [235, 615], [400, 602], [410, 675], [215, 730], [395, 745], [290, 785], [410, 793]] },
  { id: 'floorR', shape: '1062,508 1315,508 1322,833 1000,833 1010,790 1055,560', fill: C.top, sx: 0.3,
    pts: [...row(1062, 1315, 508, 4), ...line([1052, 560], [1000, 833], 6), ...line([1316, 570], [1322, 833], 5), ...row(1000, 1322, 833, 5), [1158, 550], [1275, 560], [1175, 597], [1160, 667], [1160, 741], [1230, 783]] },
  { id: 'base', shape: '43,833 1463,833 1463,938 43,938', fill: C.face, sx: 1,
    pts: [...row(43, 1463, 833, 19), ...row(43, 1463, 938, 18)] },
  { id: 'blockFront', shape: '500,615 995,615 1000,833 1000,938 520,938 500,833', fill: C.face, sx: 0.7,
    pts: [...row(500, 995, 615, 7), ...line([500, 690], [505, 833], 3), ...line([998, 690], [1000, 833], 3), ...row(520, 1000, 938, 7), [645, 780], [788, 777], [910, 772]] },
  { id: 'blockTop', shape: '538,409 1035,409 997,615 500,615', fill: C.top, sx: 0.4,
    pts: [...row(538, 1035, 409, 7), ...line([530, 455], [505, 580], 4), ...line([1025, 450], [1000, 580], 4), ...row(500, 997, 615, 7), [625, 452], [768, 464], [920, 490], [790, 522], [645, 540], [890, 562], [757, 580]] },
  { id: 'blockSide', shape: '1035,409 1062,409 1062,510 1010,800 1000,833 992,625', fill: '#00006c', sx: 3,
    pts: [...line([1035, 409], [992, 625], 7), ...line([992, 625], [1000, 833], 5), ...line([1062, 409], [1062, 510], 5), ...line([1062, 530], [1005, 810], 12), ...line([1045, 430], [1003, 740], 10)] },
  { id: 'legBack', shape: '180,409 243,409 238,570 185,570', fill: C.face, sx: 1,
    pts: [...line([180, 409], [185, 570], 4), ...line([243, 409], [238, 570], 4), [226, 480]] },
  { id: 'legL', shape: '43,409 180,409 185,600 188,833 50,833 43,600', fill: C.face, sx: 1,
    bands: [[C.edge, '43,409 170,409 175,480 182,590 165,560 155,480 140,445 100,465 68,490 65,600 45,610'], [C.navy, '130,425 150,435 140,455'], [C.teal, '172,415 180,415 183,580 176,540']],
    pts: [...line([43, 409], [50, 833], 6), ...line([170, 409], [185, 833], 6), ...line([176, 420], [184, 820], 5), [105, 412], [110, 833], [85, 833], [140, 833]] },
  { id: 'legR', shape: '1313,409 1447,409 1447,833 1322,833 1318,600', fill: C.face, sx: 1,
    bands: [[C.edge, '1313,409 1447,409 1447,610 1425,560 1428,490 1345,455 1325,490 1320,600']],
    pts: [...line([1313, 409], [1322, 833], 6), ...line([1440, 409], [1445, 833], 6), [1380, 412], [1360, 833], [1400, 833]] },
  { id: 'side', shape: '1447,370 1513,42 1515,505 1527,508 1527,615 1463,938 1463,833 1447,833', fill: '#00009c', sx: 2,
    bands: [[C.edge, '1450,360 1500,110 1497,305 1465,325 1455,370'], [C.face, '1455,400 1510,315 1512,600 1455,610']],
    pts: [...line([1447, 380], [1447, 833], 9), ...line([1513, 42], [1515, 505], 11), ...line([1527, 508], [1463, 938], 14), ...line([1497, 130], [1475, 800], 14), ...line([1450, 370], [1505, 90], 8)] },
  { id: 'fascia', shape: '30,370 1449,370 1447,409 30,409', fill: C.edge, sx: 1, ink: 0.8,
    bands: [[C.navy, '30,370 80,385 65,409 30,409'], [C.lime, '140,370 290,370 270,380 165,380'], [C.green, '500,370 950,370 900,381 540,381'], [C.lime, '600,370 880,370 840,378 640,378'], [C.green, '160,400 300,400 300,409 160,409'], [C.green, '640,402 860,402 860,409 640,409'], [C.lime, '1180,370 1340,370 1320,380 1210,380'], [C.teal, '1150,398 1330,398 1330,409 1150,409'], [C.navy, '1040,370 1070,370 1062,404 1046,404'], [C.navy, '390,390 420,386 430,392 400,396'], [C.navy, '950,390 990,387 985,395'], [C.navy, '1400,400 1447,370 1447,409 1400,409']],
    pts: [...row(30, 1449, 370, 19), ...row(30, 1447, 409, 19)] },
  { id: 'roof', shape: '95,42 1513,42 1449,370 32,370', fill: C.cyan, sx: 0.33, ink: 0.8, bands: roofBands, pts: roofPts },
];

const ModelSvg = styled.svg`
  position: absolute;
  left: 250px;
  top: 150px;
  width: 680px;
  height: 360px;
`;
const Model = () => (
  <ModelSvg viewBox="0 0 1568 1080" preserveAspectRatio="none" role="img" aria-label="Stress contour of the model">
    {faces.map(f => (
      <g key={f.id}>
        <clipPath id={f.id}><polygon points={f.shape} /></clipPath>
        <g clipPath={`url(#${f.id})`}>
          <polygon points={f.shape} fill={f.fill} />
          {f.bands?.map(([c, p], k) => <polygon key={k} points={p} fill={c} />)}
          <path d={edges(f.pts, f.sx)} fill="none" stroke="#000" strokeOpacity={f.ink ?? 0.6} vectorEffect="non-scaling-stroke" shapeRendering="crispEdges" />
        </g>
        <polygon points={f.shape} fill="none" stroke="#000" vectorEffect="non-scaling-stroke" />
      </g>
    ))}
  </ModelSvg>
);

/* ---------- viewport ---------- */

const View = styled.section`
  position: relative;
  flex: 1;
  min-height: 0;
  background: #fff;
  padding: 16px;
  overflow: hidden;
  color: #000;
`;
const Info = styled.p`
  margin: 0 0 23px;
  line-height: 16px;
  strong { display: block; }
`;
const Legend = styled.div`
  display: flex;
  gap: 8px;
`;
const Swatches = styled.div`
  width: 17px;
  height: 163px;
  border: 1px solid #000;
  display: grid;
  grid-template-rows: repeat(9, 1fr);
  span + span { border-top: 1px solid #000; }
`;
const Swatch = styled.span<{ $c: string }>`
  background: ${p => p.$c};
`;
const Levels = styled.ol`
  list-style: none;
  margin: -8px 0 0;
  padding: 0;
  height: 178px;
  display: flex;
  flex-direction: column;
  justify-content: space-between;
  line-height: 16px;
  li:first-child, li:last-child { font-weight: 700; }
`;
const Ruler = styled.div`
  position: absolute;
  left: 465px;
  top: 462px;
  display: grid;
  grid-template-columns: repeat(5, 114px);
  grid-template-rows: 15px 10px 20px;
  text-align: center;
  line-height: 16px;
  font-size: 10px;
`;
const Mark = styled.span<{ $c: number; $low?: boolean; $wide?: boolean }>`
  grid-column: ${p => p.$c} / span 1;
  grid-row: ${p => (p.$low ? 3 : 1)};
  width: ${p => (p.$wide ? 66 : 46)}px;
  white-space: nowrap;
  ${p => p.$low && 'line-height: 20px;'}
`;
const Scale = styled.div`
  grid-column: 1 / span 4;
  grid-row: 2;
  width: 458px;
  margin-left: 23px;
  border: 1px solid #000;
  background: linear-gradient(90deg, #000 25%, #fff 25% 50%, #000 50% 75%, #fff 75%);
`;
const Edge = styled.svg`
  position: absolute;
  right: 0;
  top: 365px;
`;

const ViewPort = () => (
  <View>
    <Info><strong>A: Transient Structural</strong>Equivalent Stress<br />Type: Equivalent (von-Mises) Stress<br />Unit: Pa<br />Time: 1.76e-002 s</Info>
    <Legend>
      <Swatches>
        {['#ff1e00', '#ffb000', '#fff200', '#aeea00', '#00d600', '#00e4b0', '#00e8ff', '#00a4ff', '#0010ff'].map(c => <Swatch key={c} $c={c} />)}
      </Swatches>
      <Levels>
        {['6.8058e6 Max', '6.0496e6', '5.2934e6', '4.5372e6', '3.781e6', '3.0248e6', '2.2686e6', '1.5124e6', '7.5622e5', '20.276 Min'].map(t => <li key={t}>{t}</li>)}
      </Levels>
    </Legend>
    <Model />
    <Ruler>
      <Mark $c={1}>0.000</Mark><Mark $c={3}>0.500</Mark><Mark $c={5} $wide>1.000 (m)</Mark>
      <Scale />
      <Mark $c={2} $low>0.250</Mark><Mark $c={4} $low>0.750</Mark>
    </Ruler>
    <Edge width="6" height="125" viewBox="0 0 6 125">
      <path d="M6 5v8H3z" fill="#101080" /><circle cx="6" cy="83" r="6" fill="#b01010" /><path d="M6 104v15H1z" fill="#70e070" />
    </Edge>
  </View>
);

/* ---------- graph ---------- */

const Bottom = styled.div`
  display: grid;
  grid-template-columns: 716px minmax(0, 1fr);
  column-gap: 3px;
  height: 326px;
  padding-top: 2px;
  flex: none;
`;
const Dock = styled.section`
  display: flex;
  flex-direction: column;
  min-height: 0;
  min-width: 0;
  & > ${PanelHead} { border-left: 1px solid #d6d6da; padding-left: 4px; }
`;
const ChartBox = styled.div`
  flex: 1;
  background: #fff;
`;

const green: P[] = [[3.3, 0], [4.4, 0.218], [5.5, 0.983], [6.6, 2.336], [7.7, 3.873], [8.8, 4.862], [9.9, 4.742], [11, 3.5], [12.1, 1.65], [13.2, 0.17], [14.3, 1.22], [14.63, 1.4], [14.96, 1.45], [15.29, 1.4], [15.62, 1.29], [15.95, 1.09], [16.28, 0.8], [16.61, 0.46], [16.94, 0.06], [17.27, 0.34], [17.6, 0.68]];
const blueY = [0, 0.036, 0.141, 0.322, 0.525, 0.656, 0.65, 0.48, 0.23, 0.03, 0.175, 0.18, 0.2, 0.2, 0.18, 0.15, 0.11, 0.06, 0.01, 0.05, 0.08];
const px = (t: number) => 94.5 + t * 33.92;
const py = (v: number) => 195.5 - v * 35.1;
const early: P[] = Array.from({ length: 10 }, (_, k) => [0.33 * (k + 1), 0] as P);
const blue: P[] = [...early, ...green.slice(1).map(([t], k) => [t, blueY[k + 1]] as P)];
const red: P[] = green.map(([t]) => [t, 0] as P);

const Series = ({ d, c }: { d: P[]; c: string }) => (
  <g>
    <polyline points={d.map(([t, v]) => `${px(t)},${py(v)}`).join(' ')} fill="none" stroke={c} />
    {d.map(([t, v], k) => <rect key={k} x={px(t) - 1.5} y={py(v) - 1.5} width="3" height="3" fill={c} />)}
  </g>
);

const Chart = () => (
  <ChartBox>
    <svg width="716" height="275" viewBox="0 0 716 275" role="img" aria-label="Stress over time" fontSize="9" fill="#333">
      <path d="M94.500 24.500V195.500M206.500 24.500V195.500M579.500 24.500V195.500" stroke="#dcdce0" fill="none" />
      <path d="M87 24.500H691.500" stroke="#8c8c8c" />
      {[0, 1, 2, 3, 4].map(v => (
        <g key={v}>
          <path d={`M87 ${py(v)}H94.500`} stroke="#999" />
          <text x="83" y={py(v) + 4} textAnchor="end">{v ? `${v}.e+7` : '0.'}</text>
        </g>
      ))}
      <text x="83" y="29" textAnchor="end">4.8624e+7</text>
      {([[0, '0.', 94], [2.5, '2.5e-3', 188], [5, '5.e-3', 271], [7.5, '7.5e-3', 359], [10, '1.e-2', 442], [12.5, '1.25e-2', 532], [15, '1.5e-2', 615], [17.6, '1.76e-2', 676]] as [number, string, number][]).map(([t, s, x]) => (
        <g key={s}>
          <path d={`M${px(t)} 196V203`} stroke="#999" />
          <text x={x} y="214" textAnchor="middle">{s}</text>
        </g>
      ))}
      <path d="M691.500 24V196" stroke="#000" strokeWidth="3" />
      <Series d={green} c="#2a6e2e" />
      <Series d={red} c="#8a3418" />
      <Series d={blue} c="#10186a" />
      <text x="394" y="239" textAnchor="middle" fontSize="12" fontWeight="700" fill="#000">[s]</text>
      <text transform="translate(36 107) rotate(-90)" textAnchor="middle" fontSize="14" fontWeight="700" fill="#000">[Pa]</text>
      <path d="M94.500 248.500h597v14h-597zM206.500 248.500v14M579.500 248.500v14" fill="#f0f0f0" stroke="#8c8c8c" />
      <text x="150" y="259" textAnchor="middle">1</text>
      <text x="392" y="259" textAnchor="middle">2</text>
      <text x="635" y="259" textAnchor="middle">3</text>
    </svg>
  </ChartBox>
);

const GraphPanel = () => (
  <Dock>
    <PanelHead><span>Graph</span><Dots /><Controls /></PanelHead>
    <Strip $pad={10}>
      <Grip />
      <Tool $w={66}>Animation</Tool>
      <Tool aria-label="First"><Icon n="first" /></Tool>
      <Tool aria-label="Play"><Icon n="play" s={12} /></Tool>
      <Tool $on aria-label="Stop"><Icon n="stopsq" s={12} /></Tool>
      <Tool aria-label="Last"><Icon n="last" /></Tool>
      <Sep />
      <Tool $on aria-label="Distributed"><Icon n="bars1" /></Tool>
      <Tool aria-label="Result sets"><Icon n="bars2" /></Tool>
      <Sep />
      <Combo $w={100} $h={22}><select aria-label="Frames"><option>20 Frames</option></select><Caret $big /></Combo>
      <Combo $w={100} $h={22}><select aria-label="Duration"><option>2 Sec (Auto)</option></select><Caret $big /></Combo>
      <Sep />
      <Tool aria-label="Export video"><Icon n="expo" /></Tool>
      <Sep />
      <Tool aria-label="Zoom to fit"><Icon n="zplay" /></Tool>
      <Tool aria-label="Colours"><Icon n="rgb" /></Tool>
      <Tool aria-label="Camera"><Icon n="cam" /></Tool>
      <Sep />
      <Tool aria-label="Add keyframe"><Icon n="film1" /></Tool>
      <Tool aria-label="Remove keyframe"><Icon n="film2" /></Tool>
      <Sep />
    </Strip>
    <Chart />
  </Dock>
);

/* ---------- tabular data ---------- */

const DataArea = styled.div`
  flex: 1;
  min-height: 0;
  overflow: hidden;
  background: #a0a0a0;
`;
const DataTable = styled.table`
  width: 388px;
  table-layout: fixed;
  border-collapse: collapse;
  background: #e9e9e3;
  td, th {
    height: 18px;
    padding: 0 0 0 3px;
    border: 1px solid #c0c0bc;
    border-left: 0;
    line-height: 16px;
    text-align: left;
    font-weight: 400;
    white-space: nowrap;
    overflow: hidden;
  }
  thead th {
    height: 17px;
    padding: 0 5px 0 0;
    background: #eeeef2;
    color: #1414a0;
    font-size: 12px;
    text-align: right;
    border-bottom-color: #666;
  }
  tbody th { background: #f0f0f0; border-color: #777; }
`;
const times = ['3.3e-004', '6.6e-004', '9.9e-004', '1.32e-003', '1.65e-003', '1.98e-003', '2.31e-003', '2.64e-003', '2.97e-003', '3.3e-003'];
const data: string[][] = [
  ...times.map(t => [t, '0.', '0.', '0.']),
  ['4.4e-003', '596.95', '2.182e+006', '3.6181e+005'],
  ['5.5e-003', '1067.8', '9.8268e+006', '1.4124e+006'],
  ['6.6e-003', '1399.7', '2.3361e+007', '3.2163e+006'],
  ['7.7e-003', '1531.2', '3.8727e+007', '5.2488e+006'],
  ['8.8e-003', '1630.', '4.8624e+007', '6.5638e+006'],
  ['9.9e-003', '1456.', '4.7419e+007', '6.3982e+006'],
];
const TabularPanel = () => (
  <Dock>
    <PanelHead><span>Tabular Data</span><Dots /></PanelHead>
    <DataArea>
      <DataTable>
        <colgroup><col width="20" /><col width="65" /><col width="103" /><col width="105" /><col width="95" /></colgroup>
        <thead><tr><th /><th>Time [s]</th><th>Minimum [Pa]</th><th>Maximum [Pa]</th><th>Average [Pa]</th></tr></thead>
        <tbody>
          {data.map((r, k) => <tr key={k}><th>{k + 1}</th>{r.map((v, j) => <td key={j}>{v}</td>)}</tr>)}
        </tbody>
      </DataTable>
    </DataArea>
  </Dock>
);

/* ---------- recorder window ---------- */

const Recorder = styled.div`
  position: fixed;
  left: 983px;
  top: 712px;
  width: 449px;
  height: 139px;
  display: flex;
  flex-direction: column;
  padding: 0 7px 7px;
  border-radius: 6px 6px 2px 2px;
  background: linear-gradient(#5a5a55, #3a3935 26px, #3e3c38);
  box-shadow: 0 0 0 1px #2c2b28 inset;
`;
const RecHead = styled.div`
  display: flex;
  align-items: center;
  gap: 5px;
  height: 28px;
  flex: none;
  color: #fff;
  font-size: 12px;
  font-weight: 700;
  span { flex: 1; }
`;
const RecBody = styled.div`
  flex: 1;
  display: flex;
  flex-direction: column;
  background: #efede9;
`;
const RecTabs = styled.div`
  display: flex;
  align-items: flex-end;
  height: 29px;
  border-bottom: 1px solid #c2c0bc;
  font-size: 12px;
`;
const RecTab = styled.button<{ $w: number; $kind?: 'on' | 'off' }>`
  width: ${p => p.$w}px;
  height: 27px;
  margin-bottom: -1px;
  padding-bottom: 2px;
  color: #111;
  ${p => p.$kind === 'on' && css`
    height: 28px;
    background: #f6f4f1;
    border: 1px solid #c2c0bc;
    border-bottom: 0;
    border-radius: 4px 4px 0 0;
  `}
  ${p => p.$kind === 'off' && css`
    background: #dcdad8;
    color: #6c6c6c;
    border: 1px solid #bcbab8;
    border-radius: 4px 4px 0 0;
  `}
`;
const RecTools = styled.div`
  flex: 1;
  display: flex;
  padding: 3px 0 0 11px;
  background: linear-gradient(#f3f1ec, #dfddda);
  border-right: 2px solid #f6f4f1;
  font-size: 12px;
`;
const RecBtn = styled.button<{ $on?: boolean }>`
  width: 70px;
  height: 72px;
  flex: none;
  display: flex;
  flex-direction: column;
  align-items: center;
  gap: 1px;
  padding-top: 4px;
  line-height: 18px;
  border: 1px solid transparent;
  border-radius: 4px;
  ${p => p.$on && 'border-color: #a4a4a4; background: linear-gradient(#d4d4d4, #e4e2e0);'}
`;
const Clock = styled.time`
  margin-left: 4px;
  font: 28px/44px "Noto Sans", sans-serif;
  color: #000;
`;
const Cursor = styled.svg`
  position: fixed;
  left: 1044px;
  top: 808px;
`;

const OcamMark = ({ s }: { s: number }) => (
  <svg width={s} height={s} viewBox="0 0 16 16">
    <rect x="0" y="2" width="16" height="13" rx="1" fill="#f6efe8" stroke="#d8d0c8" />
    <circle cx="6" cy="9.500" r="3" fill="#d8783c" /><rect x="11" y="5" width="2.500" height="8" fill="#d8783c" /><circle cx="8.500" cy="4.500" r=".8" fill="#888" />
  </svg>
);

const RecorderWindow = () => (
  <>
    <Recorder role="dialog" aria-label="oCam">
      <RecHead>
        <OcamMark s={14} /><span>oCam (1, 0, 1919, 1079)</span>
        <button aria-label="Minimize"><svg width="9" height="10"><path d="M0 8.500h8" stroke="#ddd" strokeWidth="2" /></svg></button>
        <button aria-label="Close"><svg width="18" height="12"><path d="M5 1l9 9M14 1l-9 9" stroke="#ddd" strokeWidth="2" /></svg></button>
      </RecHead>
      <RecBody>
        <RecTabs>
          <RecTab $w={61}>菜单</RecTab>
          <RecTab $w={81} $kind="on">屏幕录制</RecTab>
          <RecTab $w={82} $kind="off">游戏录制</RecTab>
          <RecTab $w={82} $kind="off">音频录制</RecTab>
        </RecTabs>
        <RecTools>
          <RecBtn $on>
            <svg width="46" height="46" viewBox="0 0 46 46">
              <defs><linearGradient id="stop" x2="0" y2="1"><stop stopColor="#ee6a5a" /><stop offset=".5" stopColor="#d62a1e" /><stop offset="1" stopColor="#fa6a38" /></linearGradient></defs>
              <circle cx="23" cy="23" r="22" fill="#fff" stroke="#8c8c8c" /><circle cx="23" cy="23" r="19.500" fill="url(#stop)" stroke="#a82014" />
              <rect x="13" y="13" width="20" height="20" fill="#f4f2f0" /><path d="M13 26l20-7v14H13z" fill="#dcd8d4" />
            </svg>停止
          </RecBtn>
          <RecBtn>
            <svg width="46" height="46" viewBox="0 0 46 46">
              <rect x="4.500" y="2.500" width="14" height="41" rx="2" fill="#ea5040" stroke="#b84434" /><rect x="27.500" y="2.500" width="14" height="41" rx="2" fill="#ea5040" stroke="#b84434" />
              <path d="M5 32l13-7v16a2 2 0 0 1-2 2H7a2 2 0 0 1-2-2zM28 26l13-5v20a2 2 0 0 1-2 2h-9a2 2 0 0 1-2-2z" fill="#ff6a40" />
            </svg>暂停
          </RecBtn>
          <RecBtn>
            <svg width="48" height="46" viewBox="0 0 48 46">
              <ellipse cx="25" cy="40" rx="16" ry="5.500" fill="#fff" stroke="#888" /><path d="M19 33h12v6H19z" fill="#e8e8e8" />
              <rect x="1" y=".5" width="46" height="34" rx="3" fill="#fff" stroke="#8a8a8a" /><rect x="6" y="5" width="36" height="25" fill="#1a4cb4" />
              <path d="M6 5h36v9C30 19 18 19 6 14z" fill="#2a66cc" /><ellipse cx="24" cy="26" rx="13" ry="4" fill="#3a8ae4" />
            </svg>屏幕捕获
          </RecBtn>
          <Clock>00:11:00</Clock>
        </RecTools>
      </RecBody>
    </Recorder>
    <Cursor width="13" height="20" viewBox="0 0 13 20"><path d="M1 1v15l3.500-3 2.500 6 2.500-1-2.500-6h5z" fill="#fff" stroke="#222" /></Cursor>
  </>
);

/* ---------- load ball ---------- */

const BallTail = styled.div`
  position: fixed;
  right: 0;
  top: 657px;
  width: 22px;
  height: 46px;
  background: #54585e;
`;
const Ball = styled.div`
  position: fixed;
  right: 4px;
  top: 650px;
  width: 60px;
  height: 60px;
  border-radius: 50%;
  background: radial-gradient(ellipse 40px 12px at 32px 30px, #22606a, transparent), linear-gradient(#24384e 45%, #0a5070 60%, #0a5878);
  border: 2px solid #2a4a5c;
  border-top-color: #4cc4cc;
  border-right-color: #4cc4cc;
  color: #fff;
  display: flex;
  align-items: baseline;
  justify-content: center;
  padding-left: 4px;
  font: 300 23px/58px Roboto, sans-serif;
  small { font-size: 11px; }
`;

/* ---------- status and task bars ---------- */

const Status = styled.footer`
  height: 21px;
  flex: none;
  display: flex;
  align-items: center;
  justify-content: flex-end;
  background: #0072d0;
  color: #c8ecff;
  padding-right: 4px;
  font-size: 13px;
  white-space: nowrap;
  span { display: flex; align-items: center; gap: 4px; }
`;
const Cell = styled.span<{ $w: number }>`
  width: ${p => p.$w}px;
`;
const TaskBar = styled.div`
  height: 36px;
  flex: none;
  display: flex;
  align-items: center;
  background: linear-gradient(90deg, #eeddd4 0 60%, #e8dcae 74%, #e8e2b0 85%, #dfe0b4);
`;
const SearchBox = styled.label`
  width: 240px;
  height: 36px;
  display: flex;
  align-items: center;
  justify-content: space-between;
  background: #fff;
  font-size: 13px;
  input { width: 60px; height: 36px; border: 0; padding: 4px 0 0; background: none; }
  input::placeholder { color: #333; opacity: 1; }
`;
const Task = styled.button<{ $on?: boolean }>`
  width: 49px;
  height: 36px;
  padding-top: 3px;
  display: grid;
  place-items: center;
  ${p => p.$on && 'background: #f8f3ee;'}
`;
const Tray = styled.div`
  margin-left: auto;
  display: flex;
  align-items: center;
  height: 36px;
`;
const Weather = styled.button`
  display: flex;
  align-items: center;
  gap: 7px;
  width: 119px;
  font-size: 14px;
`;
const TrayBtn = styled.button`
  width: 24px;
  height: 36px;
  display: grid;
  place-items: center;
  font-size: 15px;
`;
const DateBox = styled.div`
  width: 30px;
  text-align: right;
  font-size: 12px;
  line-height: 18px;
`;

const tasks: [string, React.ReactNode][] = [
  ['Task view', <g fill="none" stroke="#222" strokeWidth="1.600"><path d="M4 4v3h9V4M4 21v-3h9v3M4 8h9v9H4zM19 4v4M19 14v7" /><path d="M17 11h4" strokeWidth="3" /></g>],
  ['Snip', <g fill="none"><ellipse cx="11" cy="9" rx="9" ry="7" fill="#f6f0f0" stroke="#d46a6a" strokeWidth="1.500" /><path d="M8 6l8 9M15 5l-3 10" stroke="#888" strokeWidth="1.500" /><circle cx="19" cy="16" r="3" stroke="#4a80c0" strokeWidth="2" /><circle cx="13" cy="19" r="3" stroke="#4a80c0" strokeWidth="2" /></g>],
  ['Calculator', <g><rect x="3" y="0" width="18" height="24" rx="1" fill="#4a6a80" /><rect x="5" y="2" width="14" height="5" fill="#5ab8e8" /><path d="M5 10h14M5 14h14M5 18h14M5 22h9" stroke="#e4ecf0" strokeWidth="2.500" strokeDasharray="3.500 1.700" /><rect x="15" y="13" width="4" height="9" fill="#123a78" /></g>],
  ['Explorer', <g><path d="M1 3h8l2 3h12v14H1z" fill="#f2c23c" /><path d="M1 8h22v12H1z" fill="#fad560" /><path d="M5 21v-7h14v7h-4v-3H9v3z" fill="#4a94c8" /></g>],
  ['Paint', <g><path d="M11 4c7 0 11 4 9 9-1 3-5 1-6 4s-1 5-5 5c-5 0-8-4-8-9s4-9 10-9z" fill="#c8dce8" stroke="#6a8aa0" /><circle cx="6" cy="11" r="1.800" fill="#d44" /><circle cx="10" cy="8" r="1.800" fill="#4a4" /><circle cx="6" cy="16" r="1.800" fill="#36c" /><path d="M22 1l-8 14-3 6" stroke="#c09050" strokeWidth="2" fill="none" /></g>],
  ['Internet Explorer', <g fill="none"><circle cx="12" cy="12" r="8" stroke="#2a94e4" strokeWidth="4" /><path d="M5 13h15" stroke="#2a94e4" strokeWidth="3.500" /><path d="M15 16h8" stroke="#eeddd4" strokeWidth="3" /><path d="M1 21C1 11 11 1 23 3" stroke="#6ac0f4" strokeWidth="2" /></g>],
  ['Settings', <g fill="none" stroke="#444"><circle cx="12" cy="12" r="6" strokeWidth="2.500" /><circle cx="12" cy="12" r="8.500" strokeWidth="3" strokeDasharray="3.300 3.400" /></g>],
  ['WPS', <path d="M0 3h5l4 11 4-11h10l-7 18h-4l-1-5-3 5H6zM15 8l-2 6 1 3 4-10z" fill="#e8442c" />],
  ['XMind', <g><rect width="24" height="24" rx="3" fill="#e4582a" /><path d="M6 7q4-2 5 2l2 1 5-1q2 3-1 5h-3l1 4q-4 2-5-2l-1-2-5 1q-1-4 3-5h1z" fill="#fff" /></g>],
  ['Workbench', <g><rect width="24" height="24" fill="#080808" /><g fill="none" stroke="#d4a030" strokeWidth="1.200"><path d="M12 1l4 2v4l-4 2-4-2V3zM8 7l4 2v4l-4 2-4-2V9zM16 7l4 2v4l-4 2-4-2V9z" /></g><text x="12" y="23" textAnchor="middle" fontSize="8" fontWeight="700" fill="#fff">WB</text></g>],
  ['oCam', <g><rect x="1" y="3" width="22" height="18" rx="1" fill="#fcf8f4" stroke="#d8d8d8" /><circle cx="9" cy="13" r="4" fill="#d8783c" /><rect x="16" y="8" width="3" height="10" fill="#d8783c" /><circle cx="13" cy="7" r="1.200" fill="#999" /></g>],
  ['Mechanical', <g><rect width="24" height="24" fill="#080808" /><g fill="none" stroke="#e0a030" strokeWidth="1.400"><circle cx="9" cy="10" r="3" /><circle cx="17" cy="5" r="2" /><circle cx="9" cy="10" r="4.500" strokeDasharray="2 1.500" strokeWidth="1.800" /><circle cx="17" cy="5" r="3.500" strokeDasharray="1.500 1.200" strokeWidth="1.800" /></g><text x="12" y="23" textAnchor="middle" fontSize="8" fontWeight="700" fill="#fff">M</text></g>],
];

const tray: [string, React.ReactNode][] = [
  ['Show hidden', <path d="M2 11l6-6 6 6" />],
  ['Microphone', <g><rect x="5" y="0" width="6" height="9" rx="2" fill="#111" /><path d="M3 7c0 6 10 6 10 0M8 11v4M5 15h6" /></g>],
  ['Battery', <g><path d="M6 5h9v6H6M16 7v2M1 4v3h4V4M3 7v4h4" /><rect x="8" y="6" width="4" height="4" fill="#111" /></g>],
  ['Network', <g><path d="M1 14C2 7 7 3 14 2M5 14c1-4 4-7 9-8M9 14c1-2 2-4 5-4" /><circle cx="13" cy="13.500" r="1" fill="#111" /></g>],
  ['Volume', <path d="M1 6h3l4-4v12l-4-4H1zM10 6c1 1 1 3 0 4M12 4c2 2 2 6 0 8M14 2c3 3 3 9 0 12" />],
];

export default function App() {
  return (
    <Shell>
      <Global />
      <TitleBar>
        <ContextTab>Context</ContextTab>
        <Title>A : Transient Structural - Mechanical [ANSYS Mechanical Enterprise]</Title>
      </TitleBar>
      <Tabs>
        <Tab $w={27} $on>me</Tab>
        <Tab $w={62}>Result</Tab>
        <Tab $w={66}>Display</Tab>
        <Tab $w={78}>Selection</Tab>
        <Tab $w={90}>Automation</Tab>
        <QuickLaunch placeholder="Quick Launch" aria-label="Quick Launch" />
      </Tabs>
      <RibbonBar />
      <Work>
        <SidePanels />
        <Right>
          <GraphicsBar />
          <ViewPort />
          <Bottom>
            <GraphPanel />
            <TabularPanel />
          </Bottom>
        </Right>
      </Work>
      <Status>
        <Cell $w={101}>
          <svg width="16" height="14" viewBox="0 0 16 14"><path d="M0 4h12v6H5l-2 3v-3H0z" fill="#f0e8b0" /><circle cx="9" cy="5.500" r="5" fill="#1a2a9c" stroke="#dde" /><path d="M9 2.500v1.500M9 5v4" stroke="#fff" strokeWidth="1.500" /></svg>
          1 Message
        </Cell>
        <Cell $w={94}>No Selection</Cell>
        <Cell $w={173}><svg width="9" height="6"><path d="M0 5l4.500-5L9 5z" fill="#fff" /></svg>Metric (m, kg, N, s, V, A)</Cell>
        <span>Degrees</span>
      </Status>
      <TaskBar>
        <SearchBox>
          <input placeholder="搜索" aria-label="搜索" />
          <svg width="76" height="36" viewBox="0 0 76 36">
            <path d="M0 36c8-8 20-12 34-10l14 10z" fill="#3a94c8" /><path d="M16 36c12-12 36-20 60-16v16z" fill="#e0a860" /><path d="M26 36c8-8 20-10 30-8l10 8z" fill="#4aa0c8" />
            <ellipse cx="60" cy="31" rx="13" ry="6" fill="#2cc0a8" /><ellipse cx="60" cy="30" rx="5" ry="2" fill="#e0a860" />
            <path d="M34 5v31" stroke="#dcdce8" strokeWidth="2" /><path d="M16 18C18 9 26 5 34 4c8 1 16 5 18 14-4-3-8-3-12 0-4-3-8-3-12 0-4-3-8-3-12 0z" fill="#3cae8c" /><path d="M28 18C28 10 31 6 34 4c3 2 6 6 6 14-4-3-8-3-12 0z" fill="#f4b83c" />
          </svg>
        </SearchBox>
        {tasks.map(([n, g]) => (
          <Task key={n} aria-label={n} $on={n === 'oCam'}><svg width="24" height="24" viewBox="0 0 24 24">{g}</svg></Task>
        ))}
        <Tray>
          <Weather>
            <svg width="26" height="24" viewBox="0 0 26 24"><path d="M6 8a7 7 0 0 0 8-6 7 7 0 0 1 2 12z" fill="#f0a83c" /><path d="M6 22a5 5 0 0 1 0-9 7 7 0 0 1 13 0 5 5 0 0 1 2 9z" fill="#b4d8f2" /><circle cx="23" cy="3" r="3" fill="#c8382c" /></svg>
            <span>29°C</span><span>多云</span>
          </Weather>
          {tray.map(([n, g]) => (
            <TrayBtn key={n} aria-label={n}><svg width="16" height="16" viewBox="0 0 16 16" fill="none" stroke="#111" strokeWidth="1.200">{g}</svg></TrayBtn>
          ))}
          <TrayBtn>中</TrayBtn>
          <DateBox>2<br />202</DateBox>
        </Tray>
      </TaskBar>
      <BallTail />
      <Ball>54<small>%</small></Ball>
      <RecorderWindow />
    </Shell>
  );
}
